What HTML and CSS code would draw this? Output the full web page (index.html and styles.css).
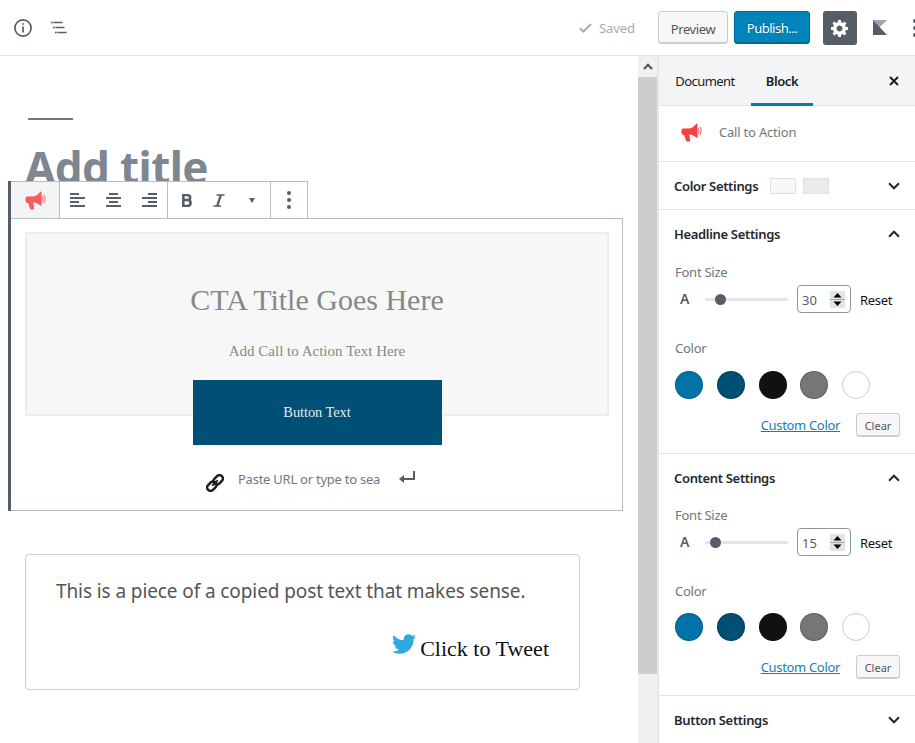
FILE: index.html
```html
<!DOCTYPE html>
<html lang="en">
<head>
    <meta charset="UTF-8">
    <meta name="viewport" content="width=device-width, initial-scale=1.0">
    <title>Add New Post</title>
    <link rel="stylesheet" href="styles.css">
</head>
<body>
    <!-- Shared icons -->
    <svg class="sprite">
        <symbol id="megaphone" viewBox="0 0 21 19">
            <path d="M1.5 5.5h6c2.500 0 5-1.500 7.800-4.800.5-.4 1.200-.1 1.200.5v12.900c0 .6-.7.900-1.200.5-2-1.900-4-3-5.800-3.200l-1.300.2 1 5.800c0 .6-.4 1-1 1H6c-.5 0-.9-.3-1.100-.8L3.200 12H2C.9 11.400.4 10.200.4 8.700.4 7.200.8 6.100 1.500 5.500z" fill="currentColor"/>
            <path d="M17.300 5.200c.8 1.500.8 4 0 5.500M18.900 3.800c1.600 2.200 1.600 6 0 8.300" fill="none" stroke="currentColor" stroke-width=".9"/>
        </symbol>
        <symbol id="chevron-down" viewBox="0 0 12 8">
            <path d="M1 1.300l5 5 5-5" fill="none" stroke="currentColor" stroke-width="2"/>
        </symbol>
        <symbol id="chevron-up" viewBox="0 0 12 8">
            <path d="M1 6.700l5-5 5 5" fill="none" stroke="currentColor" stroke-width="2"/>
        </symbol>
    </svg>

    <!-- Top bar -->
    <header class="header">
        <div class="header-left">
            <svg class="icon-info" viewBox="0 0 18 18">
                <circle cx="9" cy="9" r="8.100" fill="none" stroke="currentColor" stroke-width="1.700"/>
                <path d="M8.200 4.200h1.700v1.600H8.200zM8.200 7.400h1.700v6.100H8.200z" fill="currentColor"/>
            </svg>
            <svg class="icon-outline" viewBox="0 0 16 13">
                <path d="M0 1.500h1.800M2.500 1.500h9M2 6.500h1.800M4.500 6.500h9M4 11.500h1.800M6.500 11.500h9" fill="none" stroke="currentColor" stroke-width="1.600"/>
            </svg>
        </div>
        <div class="header-right">
            <span class="saved">
                <svg class="icon-check" viewBox="0 0 13 10"><path d="M1 5.200l3.400 3.400L12 1" fill="none" stroke="currentColor" stroke-width="2"/></svg>
                <span>Saved</span>
            </span>
            <button class="btn-preview">Preview</button>
            <button class="btn-publish">Publish...</button>
            <button class="btn-settings">
                <svg viewBox="0 0 20 20"><path d="M18 12h-2.180c-.17.700-.44 1.350-.81 1.930l1.540 1.540-2.100 2.100-1.540-1.540c-.58.360-1.230.630-1.910.790V19H8v-2.180c-.68-.16-1.330-.43-1.910-.79l-1.540 1.540-2.120-2.120 1.540-1.540c-.36-.58-.63-1.230-.79-1.910H1V9.030h2.170c.16-.7.440-1.350.8-1.940L2.430 5.550l2.100-2.100 1.540 1.540c.58-.37 1.240-.64 1.930-.81V2h3v2.180c.68.160 1.330.430 1.910.79l1.540-1.540 2.120 2.120-1.540 1.540c.36.590.64 1.240.8 1.940H18V12zm-8.500 1.500c1.660 0 3-1.340 3-3s-1.340-3-3-3-3 1.340-3 3 1.340 3 3 3z" fill="#fff"/></svg>
            </button>
            <svg class="icon-k" viewBox="0 0 14 15">
                <path d="M0 0h14L6.500 7.500z" fill="#a3a7ac"/>
                <path d="M0 0l14 15H0z" fill="#555d66"/>
            </svg>
            <svg class="icon-more" viewBox="0 0 4 18"><g fill="currentColor"><circle cx="2" cy="2" r="2"/><circle cx="2" cy="9" r="2"/><circle cx="2" cy="16" r="2"/></g></svg>
        </div>
    </header>

    <div class="main">
        <!-- Editor -->
        <div class="editor">
            <div class="title-line"></div>
            <div class="title">Add title</div>

            <div class="block">
                <div class="toolbar">
                    <div class="tool-group tool-type"><svg class="megaphone"><use href="#megaphone"/></svg></div>
                    <div class="tool-group tool-align">
                        <svg viewBox="0 0 15 14"><path d="M0 1h9M0 5h15M0 9h9M0 13h15" stroke="currentColor" stroke-width="1.800"/></svg>
                        <svg viewBox="0 0 15 14"><path d="M3 1h9M0 5h15M3 9h9M0 13h15" stroke="currentColor" stroke-width="1.800"/></svg>
                        <svg viewBox="0 0 15 14"><path d="M6 1h9M0 5h15M6 9h9M0 13h15" stroke="currentColor" stroke-width="1.800"/></svg>
                    </div>
                    <div class="tool-group tool-format">
                        <svg class="icon-bold" viewBox="0 0 10 13"><path d="M1.300 1.100h3.600c2.300 0 3.300.8 3.300 2.400 0 1.500-1 2.500-2.800 2.500H1.300zM1.300 6.100h4.200c2.100 0 3.100 1 3.100 2.800 0 2-1.300 3-3.500 3H1.300z" fill="none" stroke="currentColor" stroke-width="2.500"/></svg>
                        <svg class="icon-italic" viewBox="0 0 12 13"><path d="M3.500 1h8M.5 12h7.500" fill="none" stroke="currentColor" stroke-width="1.700"/><path d="M7.800 1L4.200 12" stroke="currentColor" stroke-width="2.400"/></svg>
                        <svg class="icon-caret" viewBox="0 0 6 5"><path d="M0 0h6L3 5z" fill="currentColor"/></svg>
                    </div>
                    <div class="tool-group tool-more">
                        <svg class="icon-dots" viewBox="0 0 4 18"><g fill="currentColor"><circle cx="2" cy="2" r="2"/><circle cx="2" cy="9" r="2"/><circle cx="2" cy="16" r="2"/></g></svg>
                    </div>
                </div>
                <div class="block-body">
                    <div class="cta">
                        <div class="cta-title">CTA Title Goes Here</div>
                        <div class="cta-text">Add Call to Action Text Here</div>
                        <div class="cta-button">Button Text</div>
                    </div>
                    <div class="url-row">
                        <svg class="icon-link" viewBox="0 0 18 18">
                            <g transform="rotate(-45 9 9)" fill="none" stroke="currentColor" stroke-width="2.500">
                                <rect x="-.7" y="5.600" width="10.400" height="6.800" rx="3.400"/>
                                <rect x="8.300" y="5.600" width="10.400" height="6.800" rx="3.400"/>
                                <path d="M5 9h8" stroke-width="1.800"/>
                            </g>
                        </svg>
                        <div class="url-input">Paste URL or type to sea</div>
                        <svg class="icon-enter" viewBox="0 0 16 13"><path d="M15 0v8H4" fill="none" stroke="currentColor" stroke-width="2"/><path d="M0 8l5-4v8z" fill="currentColor"/></svg>
                    </div>
                </div>
            </div>

            <div class="tweet">
                <div class="tweet-text">This is a piece of a copied post text that makes sense.</div>
                <div class="tweet-link">
                    <svg class="icon-bird" viewBox="0 0 24 20"><path d="M23.950 2.570a10 10 0 0 1-2.820.770 4.960 4.960 0 0 0 2.160-2.720c-.95.550-2 .95-3.130 1.180a4.920 4.920 0 0 0-8.380 4.480C7.690 6.090 4.070 4.130 1.640 1.150a4.820 4.820 0 0 0-.67 2.480c0 1.710.87 3.210 2.190 4.100a4.900 4.900 0 0 1-2.230-.62v.06a4.920 4.920 0 0 0 3.950 4.830 5 5 0 0 1-2.210.08 4.940 4.940 0 0 0 4.600 3.420A9.870 9.870 0 0 1 0 17.540a14 14 0 0 0 7.550 2.210c9.050 0 14-7.500 14-13.980 0-.21 0-.42-.02-.63a9.940 9.940 0 0 0 2.460-2.550z" fill="#2ca9e1"/></svg>
                    <span>Click to Tweet</span>
                </div>
            </div>
        </div>

        <div class="scrollbar">
            <div class="scroll-up"><svg viewBox="0 0 10 7"><path d="M1 6l4-4.200L9 6" fill="none" stroke="#505050" stroke-width="2"/></svg></div>
            <div class="scroll-thumb"></div>
        </div>

        <!-- Block settings -->
        <aside class="sidebar">
            <div class="tabs">
                <div class="tab">Document</div>
                <div class="tab active">Block</div>
                <svg class="icon-close" viewBox="0 0 10 10"><path d="M1 1l8 8M9 1L1 9" stroke="currentColor" stroke-width="2"/></svg>
            </div>
            <div class="block-card">
                <svg class="megaphone"><use href="#megaphone"/></svg>
                <span>Call to Action</span>
            </div>
            <div class="panel">
                <div class="panel-head">
                    <span>Color Settings</span>
                    <i class="swatch light"></i>
                    <i class="swatch dark"></i>
                    <svg class="chevron"><use href="#chevron-down"/></svg>
                </div>
            </div>
            <div class="panel headline">
                <div class="panel-head">
                    <span>Headline Settings</span>
                    <svg class="chevron"><use href="#chevron-up"/></svg>
                </div>
                <div class="label">Font Size</div>
                <div class="range-row">
                    <span class="range-icon">A</span>
                    <div class="slider"><div class="knob" style="left: 10px"></div></div>
                    <div class="number"><span>30</span><svg class="spin" viewBox="0 0 15 17"><path d="M0 0h15v17H0z" fill="#e3e3e3"/><path d="M0 8.500h15" stroke="#a9a9a9"/><path d="M7.500 2l4 4.500h-8zM7.500 15l4-4.500h-8z" fill="#000"/></svg></div>
                    <span class="reset">Reset</span>
                </div>
                <div class="label color-label">Color</div>
                <div class="colors">
                    <i class="color blue"></i>
                    <i class="color navy"></i>
                    <i class="color black"></i>
                    <i class="color gray"></i>
                    <i class="color white"></i>
                </div>
                <div class="color-actions">
                    <a class="custom">Custom Color</a>
                    <button class="btn-clear">Clear</button>
                </div>
            </div>
            <div class="panel">
                <div class="panel-head">
                    <span>Content Settings</span>
                    <svg class="chevron"><use href="#chevron-up"/></svg>
                </div>
                <div class="label">Font Size</div>
                <div class="range-row">
                    <span class="range-icon">A</span>
                    <div class="slider"><div class="knob" style="left: 5px"></div></div>
                    <div class="number"><span>15</span><svg class="spin" viewBox="0 0 15 17"><path d="M0 0h15v17H0z" fill="#e3e3e3"/><path d="M0 8.500h15" stroke="#a9a9a9"/><path d="M7.500 2l4 4.500h-8zM7.500 15l4-4.500h-8z" fill="#000"/></svg></div>
                    <span class="reset">Reset</span>
                </div>
                <div class="label color-label">Color</div>
                <div class="colors">
                    <i class="color blue"></i>
                    <i class="color navy"></i>
                    <i class="color black"></i>
                    <i class="color gray"></i>
                    <i class="color white"></i>
                </div>
                <div class="color-actions">
                    <a class="custom">Custom Color</a>
                    <button class="btn-clear">Clear</button>
                </div>
            </div>
            <div class="panel">
                <div class="panel-head">
                    <span>Button Settings</span>
                    <svg class="chevron"><use href="#chevron-down"/></svg>
                </div>
            </div>
        </aside>
    </div>
</body>
</html>
```
FILE: styles.css
```css
* {
    box-sizing: border-box;
}
body {
    margin: 0;
    height: 743px;
    overflow: hidden;
    background: #fff;
    color: #555d66;
    font-family: "Noto Sans", sans-serif;
    font-size: 13px;
    line-height: 18px;
}
svg {
    display: block;
    flex: none;
}
button {
    padding: 0;
    font-family: inherit;
    font-size: 13px;
    border-radius: 3px;
}
.sprite {
    display: none;
}
.megaphone {
    width: 21px;
    height: 19px;
    color: #f93f3f;
}

/* Top bar */
.header {
    display: flex;
    justify-content: space-between;
    height: 56px;
    border-bottom: 1px solid #e2e4e7;
    overflow: hidden;
}
.header-left {
    display: flex;
    align-items: center;
    gap: 19px;
    padding-left: 14px;
}
.icon-info {
    width: 18px;
    height: 18px;
}
.icon-outline {
    width: 16px;
    height: 13px;
}
.header-right {
    display: flex;
    align-items: center;
    width: 336px;
    flex: none;
}
.saved {
    display: flex;
    flex: none;
    align-items: center;
    gap: 7px;
    width: 79px;
    color: #a3abb3;
    letter-spacing: -.1px;
}
.icon-check {
    width: 13px;
    height: 10px;
}
.btn-preview {
    flex: none;
    width: 70px;
    height: 33px;
    padding-top: 3px;
    border: 1px solid #ccc;
    box-shadow: inset 0 -1px 0 #ccc;
    background: #f7f7f7;
    color: #555;
    letter-spacing: -.4px;
}
.btn-publish {
    flex: none;
    width: 76px;
    height: 33px;
    margin-left: 6px;
    border: 1px solid #006a95;
    box-shadow: inset 0 -1px 0 #006a95;
    background: #0085ba;
    color: #fff;
    letter-spacing: -.5px;
    text-shadow: 0 -1px 1px #005d82;
}
.btn-settings {
    display: flex;
    flex: none;
    align-items: center;
    justify-content: center;
    width: 34px;
    height: 34px;
    margin-left: 13px;
    border: none;
    background: #555d66;
}
.btn-settings svg {
    width: 20px;
    height: 20px;
}
.icon-k {
    width: 14px;
    height: 15px;
    margin-left: 16px;
}
.icon-more {
    width: 4px;
    height: 18px;
    margin-left: 26px;
}

.main {
    display: flex;
    height: 687px;
}

/* Editor */
.editor {
    width: 638px;
    padding: 62px 0 0 8px;
}
.title-line {
    width: 45px;
    height: 2px;
    margin-left: 20px;
    background: #767676;
}
.title {
    height: 61px;
    margin-left: 17px;
    padding-top: 17px;
    overflow: hidden;
    color: #7e868f;
    font-size: 44px;
    font-weight: 700;
    letter-spacing: -.6px;
    line-height: 60px;
}
.block {
    width: 615px;
    height: 330px;
    border-left: 3px solid #555d66;
}
.toolbar {
    display: flex;
    width: 297px;
    height: 37px;
    border-top: 1px solid #b5bcc2;
}
.tool-group {
    display: flex;
    align-items: center;
    border-right: 1px solid #b5bcc2;
}
.tool-type {
    justify-content: center;
    width: 49px;
    background: #f3f4f5;
}
.tool-type .megaphone {
    color: #fb5b5b;
}
.tool-align {
    justify-content: space-between;
    width: 108px;
    padding: 0 10px;
}
.tool-align svg {
    width: 15px;
    height: 14px;
}
.tool-format {
    width: 103px;
    padding-left: 14px;
}
.icon-bold {
    width: 10px;
    height: 13px;
}
.icon-italic {
    width: 12px;
    height: 13px;
    margin-left: 21px;
}
.icon-caret {
    width: 6px;
    height: 5px;
    margin-left: 24px;
}
.tool-more {
    justify-content: center;
    width: 37px;
}
.icon-dots {
    width: 4px;
    height: 18px;
}
.block-body {
    height: 293px;
    padding: 13px 13px 0 14px;
    border: 1px solid #b5bcc2;
    border-left: none;
}
.cta {
    display: flex;
    flex-direction: column;
    align-items: center;
    height: 184px;
    padding-top: 48px;
    border: 2px solid #ececec;
    background: #f7f7f7;
    color: #888;
    font-family: "Liberation Serif", serif;
}
.cta-title {
    font-size: 30px;
    line-height: 36px;
}
.cta-text {
    margin-top: 23px;
    font-size: 15px;
    line-height: 20px;
}
.cta-button {
    flex: none;
    width: 249px;
    height: 65px;
    margin-top: 19px;
    background: #005075;
    color: #e2e9ee;
    font-size: 14.500px;
    letter-spacing: -.1px;
    line-height: 64px;
    text-align: center;
}
.url-row {
    display: flex;
    margin-top: 54px;
    padding-left: 181px;
}
.icon-link {
    width: 18px;
    height: 18px;
    margin-top: 4px;
    color: #191e23;
}
.url-input {
    width: 143px;
    margin-left: 14px;
    color: #72777c;
    letter-spacing: -.25px;
    white-space: nowrap;
}
.icon-enter {
    width: 16px;
    height: 13px;
    margin: 1px 0 0 18px;
}
.tweet {
    width: 555px;
    height: 136px;
    margin: 43px 0 0 17px;
    padding: 23px 30px;
    border: 1px solid #ccc;
    border-radius: 4px;
}
.tweet-text {
    color: #555;
    font-size: 19px;
    letter-spacing: -.1px;
    line-height: 26px;
    white-space: nowrap;
}
.tweet-link {
    display: flex;
    justify-content: flex-end;
    margin-top: 30px;
    color: #111;
    font-family: "Liberation Serif", serif;
    font-size: 22px;
    line-height: 30px;
}
.icon-bird {
    width: 24px;
    height: 20px;
    margin-right: 4px;
}

.scrollbar {
    width: 20px;
    border-right: 1px solid #e8eaeb;
    background: #f0f0f0;
}
.scroll-up {
    display: flex;
    align-items: center;
    justify-content: center;
    height: 21px;
}
.scroll-up svg {
    width: 10px;
    height: 7px;
}
.scroll-thumb {
    height: 597px;
    background: #cdcdcd;
}

/* Sidebar */
.sidebar {
    flex: 1;
    border-left: 1px solid #e2e4e7;
}
.tabs {
    display: flex;
    align-items: center;
    height: 50px;
    border-bottom: 1px solid #e2e4e7;
    background: #f3f4f5;
    color: #191e23;
}
.tab {
    width: 92px;
    height: 50px;
    letter-spacing: -.55px;
    text-align: center;
    line-height: 51px;
}
.tab.active {
    width: 62px;
    border-bottom: 3px solid #007cba;
    font-weight: 600;
    letter-spacing: -.4px;
}
.icon-close {
    width: 10px;
    height: 10px;
    margin-left: 76px;
}
.block-card {
    display: flex;
    align-items: center;
    gap: 17px;
    height: 56px;
    padding: 0 0 3px 22px;
    border-bottom: 1px solid #e2e4e7;
    color: #72777c;
    letter-spacing: -.2px;
}
.panel {
    padding: 0 15px 0 16px;
    border-bottom: 1px solid #e2e4e7;
}
.panel-head {
    display: flex;
    align-items: center;
    height: 47px;
    margin-left: -1px;
    color: #23282d;
    font-weight: 600;
    letter-spacing: -.33px;
}
.chevron {
    width: 12px;
    height: 8px;
    margin-left: auto;
}
.swatch {
    width: 26px;
    height: 16px;
    border: 1px solid #e0e0e0;
}
.swatch.light {
    margin: 0 7px 0 12px;
    background: #f7f7f7;
}
.swatch.dark {
    background: #ebebeb;
}
.label {
    margin-top: 5px;
    color: #6c7781;
    letter-spacing: -.25px;
}
.range-row {
    display: flex;
    align-items: center;
    height: 28px;
    margin-top: 4px;
}
.range-icon {
    width: 30px;
    padding-left: 5px;
    font-size: 14px;
    font-weight: 600;
}
.slider {
    position: relative;
    width: 83px;
    height: 3px;
    border-radius: 2px;
    background: #e2e4e7;
}
.knob {
    position: absolute;
    top: -4px;
    width: 11px;
    height: 11px;
    border-radius: 50%;
    background: #555d66;
}
.number {
    display: flex;
    align-items: center;
    justify-content: space-between;
    width: 54px;
    height: 28px;
    margin-left: 9px;
    padding: 2px 5px 0 4px;
    border: 1px solid #8d96a0;
    border-radius: 4px;
}
.spin {
    width: 15px;
    height: 17px;
    margin-top: -2px;
}
.reset {
    margin: 2px 0 0 9px;
    color: #111;
    letter-spacing: -.3px;
}
.color-label {
    margin-top: 26px;
}
.colors {
    display: flex;
    gap: 13.800px;
    margin-top: 13px;
}
.color {
    width: 28px;
    height: 28px;
    border-radius: 50%;
    border: 1px solid rgba(0, 0, 0, .2);
}
.color.blue {
    background: #0073a8;
}
.color.navy {
    background: #005075;
}
.color.black {
    background: #111;
}
.color.gray {
    background: #767676;
}
.color-actions {
    display: flex;
    align-items: center;
    justify-content: flex-end;
    gap: 16px;
    margin: 14px 0 16px;
}
.custom {
    color: #1180b5;
    letter-spacing: -.33px;
    text-decoration: underline;
}
.btn-clear {
    width: 44px;
    height: 24px;
    border: 1px solid #ccc;
    box-shadow: inset 0 -1px 0 #ccc;
    background: #f7f7f7;
    color: #555;
    font-size: 11px;
}
.headline .panel-head {
    height: 48px;
}
.headline .color-label {
    margin-top: 26px;
}
.headline .colors {
    margin-top: 14px;
}
```
